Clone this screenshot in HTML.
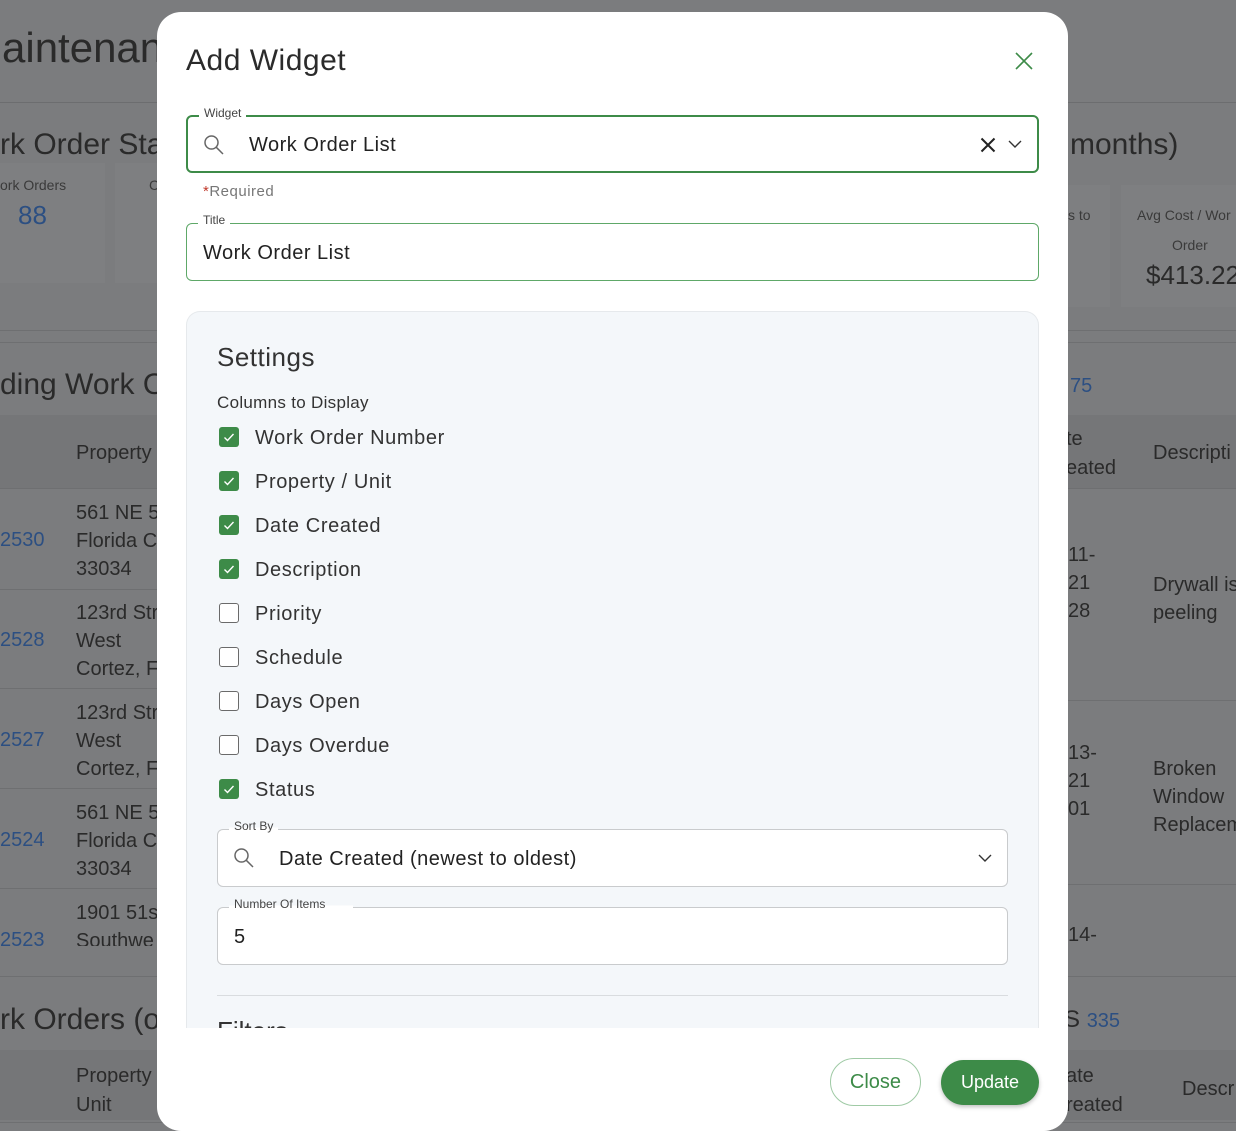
<!DOCTYPE html>
<html><head><meta charset="utf-8"><style>
*{box-sizing:border-box;margin:0;padding:0}
html{width:1236px;height:1131px;overflow:hidden}
body{width:1236px;height:1131px;overflow:hidden;position:relative;background:#7b7c7e;font-family:"Liberation Sans",sans-serif;color:#2a2a2a}
.bg{position:absolute;white-space:nowrap}
.hl{position:absolute;left:0;right:0;height:1px;background:#6e6f71}
.band{position:absolute;left:0;right:0;background:#757678}
.blue{color:#2c4f82}
.modal{position:absolute;left:157px;top:12px;width:911px;height:1119px;background:#fff;border-radius:24px}
.abs{position:absolute;white-space:nowrap}
.field{position:absolute;border-radius:6px}
.lbl{position:absolute;top:-9px;font-size:12px;color:#444;background:#fff;padding:0 5px;line-height:16px}
.cb{position:absolute;left:219px;width:20px;height:20px;border-radius:3px}
.on{background:#3d8b48}
.off{border:1.5px solid #6a6a6a;background:#fff}
.cl{position:absolute;left:255px;font-size:20px;letter-spacing:.6px;color:#333;line-height:24px}
</style></head><body>
<div class="band" style="top:102px;height:1px;background:#6c6d6f"></div>
<div class="bg" style="left:2px;top:24px;font-size:42px">aintenan</div>
<div class="bg" style="left:0;top:128px;font-size:30px">rk Order Stat</div>
<div class="band" style="left:0;width:105px;top:163px;height:120px;background:#7e7f81"></div>
<div class="band" style="left:115px;width:42px;top:163px;height:120px;background:#7e7f81"></div>
<div class="bg" style="left:0;top:177px;font-size:14px;color:#3a3a3a">ork Orders</div>
<div class="bg" style="left:149px;top:177px;font-size:14px;color:#3a3a3a">C</div>
<div class="bg blue" style="left:18px;top:200px;font-size:26px">88</div>
<div class="bg" style="left:1070px;top:128px;font-size:30px">months)</div>
<div class="band" style="left:1068px;width:42px;top:185px;height:122px;background:#7e7f81"></div>
<div class="band" style="left:1121px;width:115px;top:185px;height:122px;background:#7e7f81"></div>
<div class="bg" style="left:1068px;top:207px;font-size:14px;color:#3a3a3a">s to</div>
<div class="bg" style="left:1137px;top:207px;font-size:14px;color:#3a3a3a">Avg Cost / Wor</div>
<div class="bg" style="left:1172px;top:237px;font-size:14px;color:#3a3a3a">Order</div>
<div class="bg" style="left:1146px;top:260px;font-size:26px">$413.22</div>
<div class="hl" style="top:330px"></div>
<div class="hl" style="top:342px"></div>
<div class="bg" style="left:0;top:368px;font-size:30px">ding Work O</div>
<div class="bg blue" style="left:1070px;top:375px;font-size:20px">75</div>
<div class="band" style="top:415px;height:73px"></div>
<div class="bg" style="left:76px;top:442px;font-size:20px">Property</div>
<div class="bg" style="left:1066px;top:425px;font-size:20px;line-height:29px">te<br>eated</div>
<div class="bg" style="left:1153px;top:442px;font-size:20px">Descripti</div>
<div class="hl" style="top:488px"></div>
<div class="bg" style="left:76px;top:499px;font-size:20px;line-height:28px">561 NE 5<br>Florida C<br>33034</div>
<div class="bg blue" style="left:0;top:529px;font-size:20px">2530</div>
<div class="bg" style="left:1068px;top:541px;font-size:20px;line-height:28px">11-<br>21<br>28</div>
<div class="bg" style="left:1153px;top:571px;font-size:20px;line-height:28px">Drywall is<br>peeling</div>
<div class="hl" style="top:589px;width:157px"></div>
<div class="bg" style="left:76px;top:599px;font-size:20px;line-height:28px">123rd Str<br>West<br>Cortez, F</div>
<div class="bg blue" style="left:0;top:629px;font-size:20px">2528</div>
<div class="hl" style="top:688px;width:157px"></div>
<div class="bg" style="left:76px;top:699px;font-size:20px;line-height:28px">123rd Str<br>West<br>Cortez, F</div>
<div class="bg blue" style="left:0;top:729px;font-size:20px">2527</div>
<div class="hl" style="top:700px;left:1068px"></div>
<div class="bg" style="left:1068px;top:739px;font-size:20px;line-height:28px">13-<br>21<br>01</div>
<div class="bg" style="left:1153px;top:755px;font-size:20px;line-height:28px">Broken<br>Window<br>Replacem</div>
<div class="hl" style="top:788px;width:157px"></div>
<div class="bg" style="left:76px;top:799px;font-size:20px;line-height:28px">561 NE 5<br>Florida C<br>33034</div>
<div class="bg blue" style="left:0;top:829px;font-size:20px">2524</div>
<div class="hl" style="top:884px;left:1068px"></div>
<div class="hl" style="top:888px;width:157px"></div>
<div class="bg" style="left:76px;top:899px;font-size:20px;line-height:28px">1901 51s<br>Southwe</div>
<div class="bg blue" style="left:0;top:929px;font-size:20px">2523</div>
<div class="bg" style="left:1068px;top:924px;font-size:20px">14-</div>
<div class="band" style="top:946px;height:30px;background:#7b7c7e"></div>
<div class="hl" style="top:976px"></div>
<div class="bg" style="left:0;top:1003px;font-size:30px">rk Orders (ol</div>
<div class="bg" style="left:1064px;top:1006px;font-size:24px">S <span class="blue" style="font-size:20px">335</span></div>
<div class="band" style="top:1050px;height:70px"></div>
<div class="bg" style="left:76px;top:1062px;font-size:20px;line-height:29px">Property<br>Unit</div>
<div class="bg" style="left:1066px;top:1062px;font-size:20px;line-height:29px">ate<br>reated</div>
<div class="bg" style="left:1182px;top:1078px;font-size:20px">Descr</div>
<div class="hl" style="top:1122px"></div>

<div class="modal"></div>
<div class="abs" style="left:186px;top:44px;font-size:30px;color:#2b2b2b;letter-spacing:.5px">Add Widget</div>
<svg class="abs" style="left:1015px;top:52px" width="18" height="18" viewBox="0 0 18 18"><path d="M1 1L17 17M17 1L1 17" stroke="#3d8b48" stroke-width="1.6"/></svg>

<div class="field" style="left:186px;top:115px;width:853px;height:58px;border:2.5px solid #3d8b48">
<span class="lbl" style="left:11px;top:-12px">Widget</span></div>
<svg class="abs" style="left:203px;top:134px" width="22" height="22" viewBox="0 0 22 22"><circle cx="8.5" cy="8.5" r="6.5" fill="none" stroke="#666" stroke-width="1.5"/><path d="M13.3 13.3L20 20" stroke="#666" stroke-width="1.5"/></svg>
<div class="abs" style="left:249px;top:134px;font-size:20px;letter-spacing:.5px;color:#222">Work Order List</div>
<svg class="abs" style="left:980px;top:137px" width="16" height="16" viewBox="0 0 16 16"><path d="M1.5 1.5L14.5 14.5M14.5 1.5L1.5 14.5" stroke="#222" stroke-width="2"/></svg>
<svg class="abs" style="left:1008px;top:140px" width="14" height="9" viewBox="0 0 14 9"><path d="M1 1L7 7L13 1" fill="none" stroke="#333" stroke-width="1.4"/></svg>
<div class="abs" style="left:203px;top:183px;font-size:15px;color:#777;letter-spacing:.5px"><span style="color:#c0392b">*</span>Required</div>

<div class="field" style="left:186px;top:223px;width:853px;height:58px;border:1.5px solid #5ea868">
<span class="lbl" style="left:11px;top:-12px">Title</span></div>
<div class="abs" style="left:203px;top:242px;font-size:20px;letter-spacing:.5px;color:#222">Work Order List</div>

<div class="abs" style="left:186px;top:311px;width:853px;height:717px;background:#f4f7fa;border:1px solid #e6e9ec;border-bottom:none;border-radius:14px 14px 0 0;overflow:hidden">
<div class="abs" style="left:30px;top:704px;font-size:26px;color:#333">Filters</div>
</div>
<div class="abs" style="left:217px;top:342px;font-size:26px;color:#333;letter-spacing:.5px">Settings</div>
<div class="abs" style="left:217px;top:393px;font-size:17px;color:#333;letter-spacing:.3px">Columns to Display</div>

<div class="cb on" style="top:427px"><svg width="20" height="20"><path d="M5.5 10.5L8.5 13.5L14.5 7" fill="none" stroke="#fff" stroke-width="1.4"/></svg></div>
<div class="cl" style="top:426px">Work Order Number</div>
<div class="cb on" style="top:471px"><svg width="20" height="20"><path d="M5.5 10.5L8.5 13.5L14.5 7" fill="none" stroke="#fff" stroke-width="1.4"/></svg></div>
<div class="cl" style="top:470px">Property / Unit</div>
<div class="cb on" style="top:515px"><svg width="20" height="20"><path d="M5.5 10.5L8.5 13.5L14.5 7" fill="none" stroke="#fff" stroke-width="1.4"/></svg></div>
<div class="cl" style="top:514px">Date Created</div>
<div class="cb on" style="top:559px"><svg width="20" height="20"><path d="M5.5 10.5L8.5 13.5L14.5 7" fill="none" stroke="#fff" stroke-width="1.4"/></svg></div>
<div class="cl" style="top:558px">Description</div>
<div class="cb off" style="top:603px"></div>
<div class="cl" style="top:602px">Priority</div>
<div class="cb off" style="top:647px"></div>
<div class="cl" style="top:646px">Schedule</div>
<div class="cb off" style="top:691px"></div>
<div class="cl" style="top:690px">Days Open</div>
<div class="cb off" style="top:735px"></div>
<div class="cl" style="top:734px">Days Overdue</div>
<div class="cb on" style="top:779px"><svg width="20" height="20"><path d="M5.5 10.5L8.5 13.5L14.5 7" fill="none" stroke="#fff" stroke-width="1.4"/></svg></div>
<div class="cl" style="top:778px">Status</div>

<div class="field" style="left:217px;top:829px;width:791px;height:58px;border:1px solid #c9cbcd;background:#fff">
<span class="lbl" style="left:11px;top:-12px;background:linear-gradient(#f4f7fa 60%,#fff 60%)">Sort By</span></div>
<svg class="abs" style="left:233px;top:847px" width="22" height="22" viewBox="0 0 22 22"><circle cx="8.5" cy="8.5" r="6.5" fill="none" stroke="#666" stroke-width="1.5"/><path d="M13.3 13.3L20 20" stroke="#666" stroke-width="1.5"/></svg>
<div class="abs" style="left:279px;top:848px;font-size:20px;letter-spacing:.5px;color:#222">Date Created (newest to oldest)</div>
<svg class="abs" style="left:978px;top:854px" width="14" height="9" viewBox="0 0 14 9"><path d="M1 1L7 7L13 1" fill="none" stroke="#333" stroke-width="1.4"/></svg>

<div class="field" style="left:217px;top:907px;width:791px;height:58px;border:1px solid #c9cbcd;background:#fff">
<span class="lbl" style="left:11px;top:-12px;background:linear-gradient(#f4f7fa 60%,#fff 60%);padding-right:28px">Number Of Items</span></div>
<div class="abs" style="left:234px;top:926px;font-size:20px;color:#222">5</div>
<div class="abs" style="left:217px;top:995px;width:791px;height:1px;background:#d9dcdf"></div>

<div class="abs" style="left:830px;top:1058px;width:91px;height:48px;border:1.5px solid #9fcaa5;border-radius:24px;color:#3d8b48;font-size:20px;text-align:center;line-height:47px">Close</div>
<div class="abs" style="left:941px;top:1060px;width:98px;height:45px;background:#3d8b48;border-radius:23px;color:#fff;font-size:18px;text-align:center;line-height:45px;box-shadow:0 2px 4px rgba(0,0,0,.25)">Update</div>
</body></html>
